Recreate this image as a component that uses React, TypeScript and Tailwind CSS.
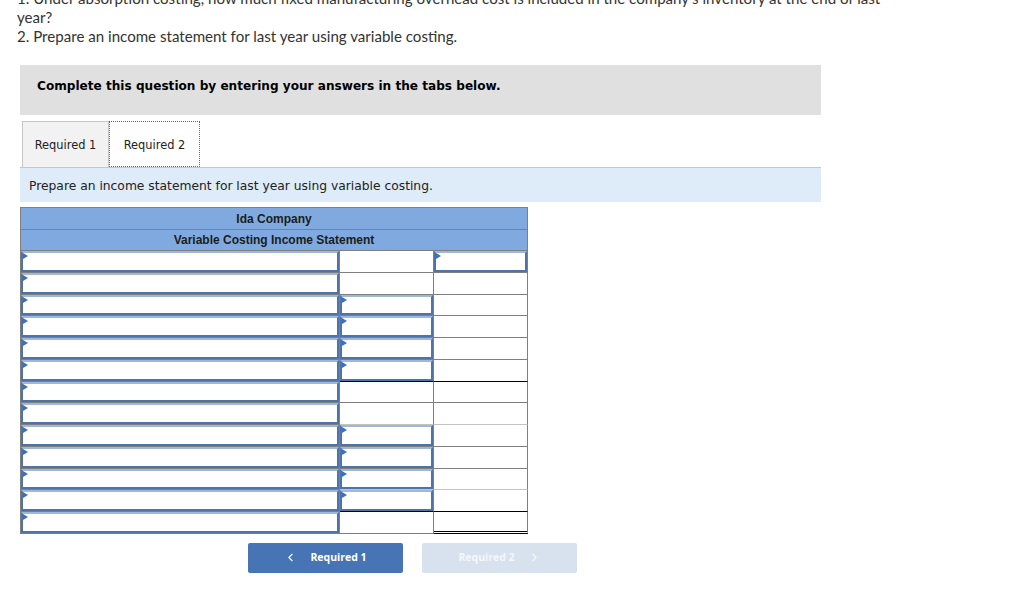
import { ChevronLeft, ChevronRight } from 'lucide-react';

type Cell = 'input' | 'plain';

interface Row {
  c2: Cell;
  c3: Cell;
  // bottom rule under the money columns
  rule?: 'single' | 'double' | 'light';
}

const rows: Row[] = [
  { c2: 'plain', c3: 'input' },
  { c2: 'plain', c3: 'plain' },
  { c2: 'input', c3: 'plain' },
  { c2: 'input', c3: 'plain' },
  { c2: 'input', c3: 'plain' },
  { c2: 'input', c3: 'plain', rule: 'single' },
  { c2: 'plain', c3: 'plain' },
  { c2: 'plain', c3: 'plain', rule: 'light' },
  { c2: 'input', c3: 'plain' },
  { c2: 'input', c3: 'plain' },
  { c2: 'input', c3: 'plain', rule: 'light' },
  { c2: 'input', c3: 'plain', rule: 'single' },
  { c2: 'plain', c3: 'plain', rule: 'double' },
];

function InputBox() {
  return (
    <div className="relative h-full w-full border-2 border-[#4e73ab] border-t-[#9fb7d9] bg-white">
      <span className="absolute left-0 top-0 h-0 w-0 border-y-[3px] border-l-[5px] border-y-transparent border-l-[#3d6fc0]" />
    </div>
  );
}

function bottomClass(rule: Row['rule']) {
  if (rule === 'single') return 'border-b border-b-black';
  if (rule === 'double') return 'border-b-[3px] border-double border-b-black';
  if (rule === 'light') return 'border-b border-b-[#c4c4c4]';
  return 'border-b border-b-[#7f7f7f]';
}

export default function App() {
  return (
    <div className="min-h-[610px] w-[1024px] overflow-hidden bg-white">
      <div className="mt-[-11px] pl-[17px] font-['Lato',sans-serif] text-[15.1px] leading-[19px] text-[#333]">
        <p>
          1. Under absorption costing, how much fixed manufacturing overhead cost is included in the company's inventory at the end of last
          <br />
          year?
        </p>
        <p>2. Prepare an income statement for last year using variable costing.</p>
      </div>

      <div className="ml-[20px] mt-[19px] w-[801px] font-['DejaVu_Sans',Verdana,sans-serif]">
        <div className="flex h-[50px] items-center bg-[#e0e0e0] pb-[8px] pl-[17px] text-[12.1px] font-bold text-black">
          Complete this question by entering your answers in the tabs below.
        </div>

        <div className="mt-[6px] flex h-[47px] items-end border-b border-[#c6c6c6] pl-[2px]">
          <div className="flex h-[46px] w-[87px] items-center justify-center border border-b-0 border-[#c6c6c6] bg-[#f2f2f2] pt-[3px] text-[11.4px] text-[#222]">
            Required 1
          </div>
          <div className="flex h-[46px] w-[91px] items-center justify-center border border-dotted border-[#3e6db5] bg-white pt-[3px] text-[11.4px] text-[#222]">
            Required 2
          </div>
        </div>

        <div className="flex h-[34px] items-center bg-[#deebf8] pl-[9px] pt-[2px] text-[12.3px] text-[#222]">
          Prepare an income statement for last year using variable costing.
        </div>
      </div>

      <div className="ml-[20px] mt-[5px] w-[508px] border-l border-t border-[#7f7f7f] font-['Liberation_Sans',Arial,sans-serif]">
        <div className="flex h-[22px] items-center justify-center border-b border-r border-[#7f7f7f] bg-[#80aadf] text-[12px] font-bold text-[#1c1c1c]">
          Ida Company
        </div>
        <div className="flex h-[21px] items-center justify-center border-b border-r border-[#7f7f7f] bg-[#80aadf] text-[12px] font-bold text-[#1c1c1c]">
          Variable Costing Income Statement
        </div>
        {rows.map((r, i) => (
          <div key={i} className="grid h-[21.75px] grid-cols-[319px_94px_94px]">
            <div className="border-b border-r border-[#7f7f7f]">
              <InputBox />
            </div>
            <div className={`border-r border-[#7f7f7f] ${r.rule === 'double' ? 'border-b border-b-[#7f7f7f]' : bottomClass(r.rule)}`}>
              {r.c2 === 'input' && <InputBox />}
            </div>
            <div className={`border-r border-[#7f7f7f] ${bottomClass(r.rule)}`}>
              {r.c3 === 'input' && <InputBox />}
            </div>
          </div>
        ))}
      </div>

      <div className="ml-[248px] mt-[9px] flex gap-[19px] font-['Open_Sans',sans-serif] text-[10.5px] font-bold">
        <button className="flex h-[30px] w-[155px] items-center justify-center gap-[13px] rounded-[2px] bg-[#4674b4] text-white">
          <ChevronLeft size={13} strokeWidth={2} />
          <span>Required 1</span>
        </button>
        <button className="flex h-[30px] w-[155px] items-center justify-center gap-[13px] rounded-[2px] bg-[#d8e2ee] text-[#f4f7fb]">
          <span>Required 2</span>
          <ChevronRight size={13} strokeWidth={2} />
        </button>
      </div>
    </div>
  );
}
